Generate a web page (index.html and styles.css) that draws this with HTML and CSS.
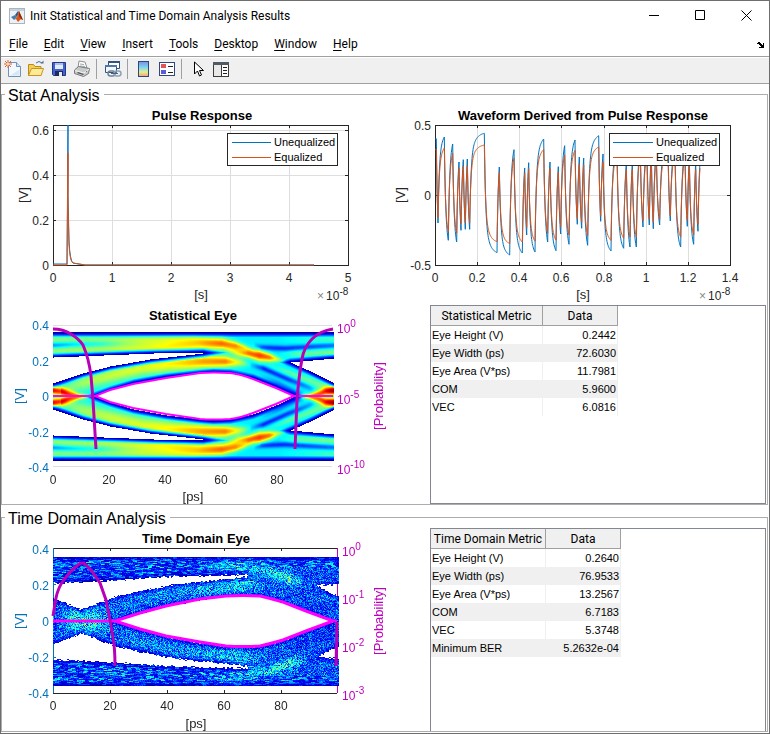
FILE: index.html
```
<!DOCTYPE html>
<html lang="en">
  <head>
    <meta charset="UTF-8" />
    <meta name="viewport" content="width=device-width, initial-scale=1.0" />
    <title>Init Statistical and Time Domain Analysis Results</title>
    <link rel="stylesheet" href="styles.css">
    <script src="plots.js" defer></script>
  </head>
  <body>
    <!-- Title Bar -->
    <header class="title-bar">
      <svg class="app-icon" width="16" height="16" viewBox="0 0 16 16" aria-hidden="true">
        <rect x="0.5" y="0.5" width="15" height="15" fill="#eef1f4" stroke="#a9b4bf" />
        <path d="M1 1h14v2H1z" fill="#c3d2e0" />
        <path d="M2 9l4-2 2 2-3 3z" fill="#3f7fb5" />
        <path d="M6 7l3-4 1 1-2 5z" fill="#275b86" />
        <path d="M5 12l3-3 2-6 4 9-2-1-3 3-2-3z" fill="#d9541a" />
        <path d="M10 3l4 9-2-1-2-3z" fill="#8f2a12" />
      </svg>
      <h1 class="title">Init Statistical and Time Domain Analysis Results</h1>
      <div class="window-controls">
        <button type="button" aria-label="Minimize">
          <svg width="11" height="11" viewBox="0 0 11 11"><path d="M0 5.5h10" /></svg>
        </button>
        <button type="button" aria-label="Maximize">
          <svg width="11" height="11" viewBox="0 0 11 11"><path d="M.5 .5h9v9h-9z" /></svg>
        </button>
        <button type="button" aria-label="Close">
          <svg width="11" height="11" viewBox="0 0 11 11"><path d="M.5 .5l10 10M10.5 .5l-10 10" /></svg>
        </button>
      </div>
    </header>

    <!-- Menu Bar -->
    <nav class="menu-bar">
      <button type="button"><u>F</u>ile</button>
      <button type="button"><u>E</u>dit</button>
      <button type="button"><u>V</u>iew</button>
      <button type="button"><u>I</u>nsert</button>
      <button type="button"><u>T</u>ools</button>
      <button type="button"><u>D</u>esktop</button>
      <button type="button"><u>W</u>indow</button>
      <button type="button"><u>H</u>elp</button>
      <button type="button" class="dock" aria-label="Dock figure">
        <svg width="8" height="6" viewBox="0 0 8 6"><path d="M0 1h1V0h2v1h1v1h1v1h1V1h1v5H2V5h2V4H3V3H2V2H0z" /></svg>
      </button>
    </nav>

    <!-- Toolbar -->
    <div class="toolbar" role="toolbar">
      <button type="button" aria-label="New figure">
        <svg width="18" height="18" viewBox="0 0 18 18">
          <path d="M4.500 2.500h8l4 4v10h-12z" fill="#f4f9fe" stroke="#6f93b8" />
          <path d="M12.500 2.500v4h4" fill="#cfe1f2" stroke="#6f93b8" />
          <path d="M6 15.500h9.500v-6z" fill="#d5e6f5" />
          <path d="M1 1l6 6M7 1L1 7M4 0v8M0 4h8" stroke="#d9623a" />
          <circle cx="4" cy="4" r="1.500" fill="#ffd9a0" />
        </svg>
      </button>
      <button type="button" aria-label="Open file">
        <svg width="18" height="18" viewBox="0 0 18 18">
          <path d="M1.500 15.500v-11h5l1.500 2h6v9z" fill="#f4cf55" stroke="#b98a1c" />
          <path d="M1.500 15.500l3-7h12l-2.500 7z" fill="#ffeb94" stroke="#c4952a" />
          <path d="M9 3q3-3 6 0" fill="none" stroke="#4d7198" />
          <path d="M13.500 3.500h3v-3z" fill="#4d7198" />
        </svg>
      </button>
      <button type="button" aria-label="Save figure">
        <svg width="18" height="18" viewBox="0 0 18 18">
          <path d="M2.500 2.500h13v13h-12l-1-1z" fill="#4262cc" stroke="#26378a" />
          <path d="M5 3h8v6H5z" fill="#e4ecfa" />
          <path d="M5 3h8v2H5z" fill="#a9bfe8" />
          <path d="M5 11h8v5H5z" fill="#23275c" />
          <path d="M9 12h3v4H9z" fill="#e8ebf2" />
        </svg>
      </button>
      <button type="button" aria-label="Print figure">
        <svg width="18" height="18" viewBox="0 0 18 18">
          <path d="M5 8l1-7 6 1 2 6z" fill="#fff" stroke="#8b9097" />
          <path d="M7 4l4 .5M7 6l5 .5" stroke="#9aa" />
          <path d="M1.500 10l4-3.500 11 2-1 5-5 3-9-3z" fill="#c9c9c9" stroke="#77797d" />
          <path d="M2 10.500l9 2.500 5-4" fill="none" stroke="#f4f4f4" />
          <path d="M4 13l6 2 1-1-6-2z" fill="#515358" />
          <path d="M13 11h1v1h-1z" fill="#4a9d37" />
        </svg>
      </button>
      <span class="separator"></span>
      <button type="button" aria-label="Link plot">
        <svg width="18" height="18" viewBox="0 0 18 18">
          <path d="M4.500 1.500h11v7h-11z" fill="#fff" stroke="#31547f" />
          <path d="M4 1h12v2H4z" fill="#31547f" />
          <path d="M1.500 5.500h11v7h-11z" fill="#f3f7fc" stroke="#31547f" />
          <path d="M1 5h12v2H1z" fill="#4c77a8" />
          <rect x="4" y="11" width="7" height="5" rx="2.500" fill="none" stroke="#6f8298" stroke-width="1.500" />
          <rect x="10" y="11" width="7" height="5" rx="2.500" fill="none" stroke="#8ea1b7" stroke-width="1.500" />
          <path d="M7 13.500h7" stroke="#4e6580" />
        </svg>
      </button>
      <span class="separator"></span>
      <button type="button" aria-label="Insert colorbar">
        <svg width="18" height="18" viewBox="0 0 18 18">
          <defs>
            <linearGradient id="bar" x1="0" y1="0" x2="0" y2="1">
              <stop offset="0" stop-color="#7d8fe6" />
              <stop offset="0.400" stop-color="#7fd6ee" />
              <stop offset="0.700" stop-color="#e6ee92" />
              <stop offset="1" stop-color="#f0a37c" />
            </linearGradient>
          </defs>
          <rect x="3.500" y="1.500" width="10" height="15" fill="url(#bar)" stroke="#2f4a7a" />
        </svg>
      </button>
      <button type="button" aria-label="Insert legend">
        <svg width="18" height="18" viewBox="0 0 18 18">
          <rect x="1.500" y="2.500" width="15" height="13" fill="#fff" stroke="#2f4a7a" />
          <path d="M3 4h5v4H3z" fill="#e25555" />
          <path d="M3 10h5v4H3z" fill="#5b5bdc" />
          <path d="M10 6.500h5M10 12.500h5" stroke="#222" />
        </svg>
      </button>
      <span class="separator"></span>
      <button type="button" aria-label="Edit plot">
        <svg width="18" height="18" viewBox="0 0 18 18">
          <path d="M5.500 2v12l3-3 2 5 2-1-2-4.500h4z" fill="#fff" stroke="#000" />
        </svg>
      </button>
      <button type="button" aria-label="Open property inspector">
        <svg width="18" height="18" viewBox="0 0 18 18">
          <rect x="1.500" y="2.500" width="15" height="14" fill="#e9e9e9" stroke="#3c3c3c" />
          <path d="M1 2h16v3H1z" fill="#4f5a66" />
          <path d="M10 5h6v11h-6z" fill="#fff" />
          <path d="M9.500 5v11" stroke="#3c3c3c" />
          <path d="M11 7.500h4M11 10.500h4M11 13.500h4" stroke="#222" />
        </svg>
      </button>
    </div>

    <main>
      <!-- Stat Analysis -->
      <fieldset class="panel">
        <legend>Stat Analysis</legend>
        <div class="row row-pair">
          <svg class="chart" viewBox="0 0 383 199">
            <g transform="translate(51 20)">
              <text class="chart-title" x="149" y="-5">Pulse Response</text>
              <path class="grid" d="M59 0v140M118 0v140M177 0v140M236 0v140M0 5h295M0 50h295M0 95h295" />
              <path class="axes" d="M0 0h295v140h-295zM59 0v3M118 0v3M177 0v3M236 0v3M59 140v-3M118 140v-3M177 140v-3M236 140v-3M0 5h3M0 50h3M0 95h3M295 5h-3M295 50h-3M295 95h-3" />
              <path class="trace unequalized" d="M0 139H14L15 0V70L16 116Q17 136 20 138L32 140H261" />
              <path class="trace equalized" d="M0 140H14L15 28V80L16 120Q17 137 20 138L32 140H261" />
              <g class="ticks end">
                <text x="-4" y="10">0.6</text>
                <text x="-4" y="55">0.4</text>
                <text x="-4" y="100">0.2</text>
                <text x="-4" y="145">0</text>
              </g>
              <g class="ticks">
                <text x="0" y="157">0</text>
                <text x="59" y="157">1</text>
                <text x="118" y="157">2</text>
                <text x="177" y="157">3</text>
                <text x="236" y="157">4</text>
                <text x="295" y="157">5</text>
                <text class="scale" x="264" y="175"><tspan class="times">×</tspan><tspan dx="2">10</tspan><tspan class="power" dy="-5">-8</tspan></text>
              </g>
              <text class="axis-label" x="148" y="174">[s]</text>
              <text class="axis-label" transform="translate(-25 70) rotate(-90)">[V]</text>
              <g class="key">
                <rect x="174" y="8" width="110" height="32" />
                <path class="trace unequalized" d="M179 17h39" />
                <path class="trace equalized" d="M179 32h39" />
                <text x="221" y="21">Unequalized</text>
                <text x="221" y="36">Equalized</text>
              </g>
            </g>
          </svg>

          <svg class="chart" viewBox="0 0 382 199">
            <g transform="translate(50 20)">
              <text class="chart-title" x="148" y="-5">Waveform Derived from Pulse Response</text>
              <path class="grid" d="M42 0v140M84 0v140M126 0v140M169 0v140M211 0v140M253 0v140M0 70h295" />
              <path class="axes" d="M0 0h295v140h-295zM42 0v3M84 0v3M126 0v3M169 0v3M211 0v3M253 0v3M42 140v-3M84 140v-3M126 140v-3M169 140v-3M211 140v-3M253 140v-3M0 70h3M295 70h-3" />
              <path class="trace unequalized" id="wave-unequalized" />
              <path class="trace equalized" id="wave-equalized" />
              <g class="ticks end">
                <text x="-4" y="5">0.5</text>
                <text x="-4" y="75">0</text>
                <text x="-4" y="145">-0.5</text>
              </g>
              <g class="ticks">
                <text x="0" y="157">0</text>
                <text x="42" y="157">0.2</text>
                <text x="84" y="157">0.4</text>
                <text x="126" y="157">0.6</text>
                <text x="169" y="157">0.8</text>
                <text x="211" y="157">1</text>
                <text x="253" y="157">1.2</text>
                <text x="295" y="157">1.4</text>
                <text class="scale" x="264" y="175"><tspan class="times">×</tspan><tspan dx="2">10</tspan><tspan class="power" dy="-5">-8</tspan></text>
              </g>
              <text class="axis-label" x="148" y="174">[s]</text>
              <text class="axis-label" transform="translate(-30 70) rotate(-90)">[V]</text>
              <g class="key">
                <rect x="174" y="8" width="110" height="32" />
                <path class="trace unequalized" d="M178 17h40" />
                <path class="trace equalized" d="M178 32h40" />
                <text x="221" y="21">Unequalized</text>
                <text x="221" y="36">Equalized</text>
              </g>
            </g>
          </svg>
        </div>

        <div class="row row-eye">
          <svg class="chart" viewBox="0 0 428 200">
            <g transform="translate(51 21)">
              <text class="chart-title" x="140" y="-5">Statistical Eye</text>
              <path class="grid" d="M0 0h279M0 141h279" />
              <foreignObject x="0" y="0" width="281" height="141">
                <canvas class="density" id="stat-eye" width="281" height="141"></canvas>
              </foreignObject>
              <path class="contour" d="M0 71H42L57 65L80 59L113 53L147 48Q160 47 177 48Q187 49 200 54L223 63L241 71H280M42 71L57 77L80 83L113 89L147 94Q160 95 177 94Q187 93 200 88L223 79L241 71" />
              <path class="bathtub" d="M0 4Q10 4 18 9T30 20Q36 34 38 51L40 75L43 124M280 4Q267 6 259 14T249 34Q246 50 244 75L242 124" />
              <g class="ticks end left-axis">
                <text x="-4" y="5">0.4</text>
                <text x="-4" y="41">0.2</text>
                <text x="-4" y="76">0</text>
                <text x="-4" y="112">-0.2</text>
                <text x="-4" y="147">-0.4</text>
              </g>
              <g class="ticks start right-axis">
                <text x="284" y="8">10<tspan class="power" dy="-6">0</tspan></text>
                <text x="284" y="79">10<tspan class="power" dy="-6">-5</tspan></text>
                <text x="284" y="149">10<tspan class="power" dy="-6">-10</tspan></text>
              </g>
              <g class="ticks">
                <text x="0" y="159">0</text>
                <text x="56" y="159">20</text>
                <text x="112" y="159">40</text>
                <text x="168" y="159">60</text>
                <text x="224" y="159">80</text>
              </g>
              <text class="axis-label" x="140" y="176">[ps]</text>
              <text class="axis-label left-axis" transform="translate(-29 71) rotate(-90)">[V]</text>
              <text class="axis-label right-axis" transform="translate(330 71) rotate(-90)">[Probability]</text>
            </g>
          </svg>

          <div class="metrics">
            <table>
              <colgroup><col class="name-col"><col class="data-col"></colgroup>
              <thead>
                <tr><th scope="col">Statistical Metric</th><th scope="col">Data</th></tr>
              </thead>
              <tbody>
                <tr><td>Eye Height (V)</td><td>0.2442</td></tr>
                <tr><td>Eye Width (ps)</td><td>72.6030</td></tr>
                <tr><td>Eye Area (V*ps)</td><td>11.7981</td></tr>
                <tr><td>COM</td><td>5.9600</td></tr>
                <tr><td>VEC</td><td>6.0816</td></tr>
              </tbody>
            </table>
          </div>
        </div>
      </fieldset>

      <!-- Time Domain Analysis -->
      <fieldset class="panel">
        <legend>Time Domain Analysis</legend>
        <div class="row row-eye">
          <svg class="chart" viewBox="0 0 428 203">
            <g transform="translate(51 20)">
              <text class="chart-title" x="143" y="-5">Time Domain Eye</text>
              <path class="axes" d="M0 0h284M0 145h284M57 0v3M114 0v3M171 0v3M228 0v3M57 145v-3M114 145v-3M171 145v-3M228 145v-3" />
              <path class="axes left-edge" d="M0 0v145M0 36h3M0 109h3" />
              <path class="axes right-edge" d="M284 0v145M284 48h-3M284 97h-3" />
              <foreignObject x="0" y="0" width="286" height="146">
                <canvas class="density" id="time-eye" width="286" height="146"></canvas>
              </foreignObject>
              <path class="contour heavy" d="M0 73H62L87 65L113 58L147 51L173 48Q190 47 207 48Q220 51 230 54L253 63L280 73H284M62 73L87 81L113 88L147 94L173 98Q190 99 207 98Q220 95 230 92L253 83L280 73" />
              <path class="bathtub" d="M0 68L3 50Q5 40 10 33L18 23L26 16Q29 14 32 16L38 22L47 35L53 52L57 72L60 90Q62 100 62 118M284 74L283 118" />
              <g class="ticks end left-axis">
                <text x="-4" y="6">0.4</text>
                <text x="-4" y="42">0.2</text>
                <text x="-4" y="78">0</text>
                <text x="-4" y="114">-0.2</text>
                <text x="-4" y="150">-0.4</text>
              </g>
              <g class="ticks start right-axis">
                <text x="289" y="8">10<tspan class="power" dy="-6">0</tspan></text>
                <text x="289" y="56">10<tspan class="power" dy="-6">-1</tspan></text>
                <text x="289" y="104">10<tspan class="power" dy="-6">-2</tspan></text>
                <text x="289" y="152">10<tspan class="power" dy="-6">-3</tspan></text>
              </g>
              <g class="ticks">
                <text x="0" y="162">0</text>
                <text x="57" y="162">20</text>
                <text x="114" y="162">40</text>
                <text x="171" y="162">60</text>
                <text x="228" y="162">80</text>
              </g>
              <text class="axis-label" x="143" y="180">[ps]</text>
              <text class="axis-label left-axis" transform="translate(-29 73) rotate(-90)">[V]</text>
              <text class="axis-label right-axis" transform="translate(330 73) rotate(-90)">[Probability]</text>
            </g>
          </svg>

          <div class="metrics metrics-open">
            <table>
              <colgroup><col class="name-col-wide"><col class="data-col"></colgroup>
              <thead>
                <tr><th scope="col">Time Domain Metric</th><th scope="col">Data</th></tr>
              </thead>
              <tbody>
                <tr><td>Eye Height (V)</td><td>0.2640</td></tr>
                <tr><td>Eye Width (ps)</td><td>76.9533</td></tr>
                <tr><td>Eye Area (V*ps)</td><td>13.2567</td></tr>
                <tr><td>COM</td><td>6.7183</td></tr>
                <tr><td>VEC</td><td>5.3748</td></tr>
                <tr><td>Minimum BER</td><td>5.2632e-04</td></tr>
              </tbody>
            </table>
          </div>
        </div>
      </fieldset>
    </main>
  </body>
</html>
```

FILE: styles.css
```
* {
  margin: 0;
  padding: 0;
  box-sizing: border-box;
}

body {
  min-height: 100vh;
  display: flex;
  flex-direction: column;
  border: 1px solid #6e6e6e;
  background-color: #fff;
  color: #000;
  font-family: Roboto, "Segoe UI", sans-serif;
  font-size: 12px;
}

button {
  border: none;
  background: none;
  color: inherit;
  font: inherit;
}

/* Title Bar */
.title-bar {
  display: flex;
  align-items: center;
  height: 29px;
  padding-left: 8px;
}

.title {
  flex-grow: 1;
  margin-left: 5px;
  font-size: 12px;
  font-weight: 400;
}

.window-controls {
  display: flex;
  height: 100%;
}

.window-controls button {
  width: 46px;
  display: flex;
  align-items: center;
  justify-content: center;
}

.window-controls button:hover {
  background-color: #e5e5e5;
}

.window-controls svg {
  fill: none;
  stroke: #000;
}

/* Menu Bar */
.menu-bar {
  display: flex;
  align-items: center;
  height: 27px;
  padding-top: 2px;
  border-bottom: 1px solid #a0a0a0;
}

.menu-bar button {
  padding: 0 8px;
}

.menu-bar u {
  text-underline-offset: 2px;
}

.menu-bar .dock {
  margin-left: auto;
  padding: 0 4px;
}

/* Toolbar */
.toolbar {
  display: flex;
  align-items: center;
  height: 27px;
  padding-bottom: 3px;
  border-top: 1px solid #fff;
  border-bottom: 1px solid #a0a0a0;
  background-color: #f0f0f0;
}

.toolbar button {
  width: 23px;
  height: 22px;
  display: flex;
  align-items: center;
  justify-content: center;
}

.toolbar button:hover {
  background-color: #dcebf7;
}

.separator {
  width: 1px;
  height: 20px;
  margin: 0 4px 0 3px;
  background-color: #a0a0a0;
}

/* Panels */
main {
  flex-grow: 1;
  display: flex;
  flex-direction: column;
  gap: 2px;
  padding: 0 1px 1px 0;
}

.panel {
  min-width: 0;
  border: 1px solid #adadad;
}

.panel legend {
  margin-left: 3px;
  padding: 3px 4px 0 3px;
  font-family: "Liberation Sans", Arial, sans-serif;
  font-size: 16px;
  line-height: 18px;
}

.row {
  display: grid;
}

.row-pair {
  grid-template-columns: 383fr 382fr;
}

.row-eye {
  grid-template-columns: 428fr 337fr;
}

/* Charts */
.chart {
  display: block;
  width: 100%;
  height: auto;
  font-family: "Liberation Sans", Arial, sans-serif;
}

.chart-title {
  font-size: 13px;
  font-weight: 700;
  text-anchor: middle;
}

.axis-label {
  fill: #262626;
  font-size: 13px;
  text-anchor: middle;
}

.ticks {
  fill: #262626;
  font-size: 12px;
  text-anchor: middle;
}

.ticks.end {
  text-anchor: end;
}

.ticks.start,
.ticks .scale {
  text-anchor: start;
}

.power {
  font-size: 10px;
}

.times {
  fill: #888;
}

.chart .left-axis {
  fill: #0072bd;
}

.chart .right-axis {
  fill: #bf00bf;
}

.grid {
  fill: none;
  stroke: #dedede;
  shape-rendering: crispEdges;
}

.axes {
  fill: none;
  stroke: #262626;
  shape-rendering: crispEdges;
}

.left-edge {
  stroke: #0072bd;
}

.right-edge {
  stroke: #bf00bf;
}

.trace {
  fill: none;
  stroke-width: 1;
}

.unequalized {
  stroke: #0072bd;
}

.equalized {
  stroke: #d95319;
}

.key rect {
  fill: #fff;
  stroke: #262626;
  shape-rendering: crispEdges;
}

.key .trace {
  shape-rendering: crispEdges;
}

.key text {
  font-size: 11px;
}

.density {
  display: block;
  image-rendering: pixelated;
}

.contour {
  fill: none;
  stroke: #f0f;
  stroke-width: 2;
}

.contour.heavy {
  stroke-width: 3;
}

.bathtub {
  fill: none;
  stroke: #b800b8;
  stroke-width: 3;
}

/* Metric Tables */
.metrics {
  margin: 1px 1px 0 0;
  border: 1px solid #828790;
  overflow: hidden;
}

.metrics-open {
  margin-top: 0;
  border-bottom: none;
}

.metrics table {
  table-layout: fixed;
  width: 187px;
  border-collapse: separate;
  border-spacing: 0;
}

.metrics-open table {
  width: 190px;
}

.name-col {
  width: 112px;
}

.name-col-wide {
  width: 115px;
}

.data-col {
  width: 75px;
}

.metrics th {
  height: 20px;
  padding-top: 1px;
  border-right: 1px solid #a0a0a0;
  border-bottom: 1px solid #a0a0a0;
  background-color: #f0f0f0;
  font-weight: 400;
  line-height: 18px;
  white-space: nowrap;
}

.metrics td {
  height: 18px;
  padding: 0 1px;
  border-right: 1px solid #f0f0f0;
  font-family: "Liberation Sans", Arial, sans-serif;
  font-size: 11px;
  line-height: 18px;
}

.metrics td:last-child {
  text-align: right;
}

.metrics tbody tr:nth-child(even) {
  background-color: #f0f0f0;
}
```

FILE: plots.js
```
// Linear interpolation over a list of [x, y] points
function lerp(points, x) {
  if (x <= points[0][0]) return points[0][1];
  for (let i = 1; i < points.length; i++) {
    const [x1, y1] = points[i];
    const [x0, y0] = points[i - 1];
    if (x <= x1) return y0 + ((y1 - y0) * (x - x0)) / (x1 - x0);
  }
  return points[points.length - 1][1];
}

// Jet colormap, v in 0..1
function jet(v) {
  const c = (k) => Math.round(255 * Math.max(0, Math.min(1, 1.5 - Math.abs(4 * v - k))));
  return [c(3), c(2), c(1)];
}

// Repeatable noise in 0..1
function noise(x, y) {
  let h = Math.imul(x + 311, 374761393) + Math.imul(y + 173, 668265263);
  h = Math.imul(h ^ (h >>> 13), 1274126177);
  return ((h ^ (h >>> 16)) >>> 0) / 4294967296;
}

/* Waveform: end of each bit run as [time, level], third of a pixel units */
const runs = [
  [4, 169], [9, -84], [28, 174], [40, -136], [53, 153], [65, -141], [72, 99], [78, -106],
  [85, 106], [91, -103], [97, 108], [104, -103], [148, 185], [186, -173], [193, 84],
  [224, -180], [237, 136], [262, -174], [269, 81], [275, -120], [281, 97], [300, -171],
  [326, 168], [338, -141], [345, 99], [363, -167], [370, 85], [377, -117], [389, 148],
  [402, -148], [420, 165], [427, -88], [433, 114], [440, -100], [446, 111], [458, -151],
  [491, 178], [497, -79], [504, 123], [528, -168], [546, 144], [566, -160], [574, 94],
  [585, -156], [592, 94], [604, -156], [616, 144], [624, -96], [636, 144], [643, -90],
  [649, 134], [655, -101], [664, 134], [674, -90], [699, 154], [706, -78], [720, 144],
  [737, -156], [750, 134], [757, -94], [763, 114], [776, -148], [782, 94], [789, -109],
  [795, 99],
];

function wavePath(gain) {
  const settle = (t) => 1 - 0.72 * Math.exp(-t / 3.6) - 0.28 * Math.exp(-t / 14);
  let [x0, y0] = [0, 169];
  let d = `M0 ${(70 - (y0 * gain) / 3).toFixed(1)}`;
  runs.forEach(([x1, y1]) => {
    for (let x = x0 + 1; x <= x1; x++) {
      const y = y0 + ((y1 - y0) * settle(x - x0)) / settle(x1 - x0);
      d += `L${(x / 3).toFixed(1)} ${(70 - (y * gain) / 3).toFixed(1)}`;
    }
    [x0, y0] = [x1, y1];
  });
  return d;
}

document.getElementById("wave-unequalized").setAttribute("d", wavePath(1));
document.getElementById("wave-equalized").setAttribute("d", wavePath(0.81));

/* Eye diagrams, both halves mirror each other, heights are measured from 0 V.
   Where low and high cross over, the gap closes into a dark seam. */
const statEye = {
  mid: 71,
  top: 64,
  gaps: [
    { low: [[0, 13], [30, 23], [57, 30], [97, 37], [133, 41], [150, 43], [182, 50]], high: [[0, 39], [50, 41], [100, 43], [150, 44], [182, 38]], from: 0, to: 182 },
    { low: [[222, 40], [237, 34], [255, 26], [281, 13]], high: [[222, 29], [237, 34], [281, 38]], from: 222, to: 281 },
    { low: [[0, -20]], high: [[28, -6], [41, 0], [57, 6], [80, 13], [113, 19], [147, 23], [160, 24], [177, 23], [200, 18], [223, 9], [242, 0], [255, -6]], from: 28, to: 255 },
  ],
  // [x, height, spread, strength]
  ridges: [
    [[0, 46, 4, 0.15], [60, 47, 4, 0.18], [110, 49, 4, 0.18], [140, 50, 4, 0.14], [170, 51, 4, 0.08], [190, 49, 3, 0.06], [200, 46, 2, 0]],
    [[0, 57, 3, 0.13], [90, 57, 3, 0.14], [140, 58, 3, 0.1], [165, 56, 3, 0.04], [180, 54, 3, 0]],
    [[50, 52, 5, 0], [110, 53, 5, 0.1], [145, 54, 4, 0.2], [168, 53, 4, 0.32], [182, 51, 3, 0.3], [192, 49, 2, 0.14], [200, 46, 2, 0]],
    [[8, 6, 4, 0.1], [30, 14, 6, 0.17], [60, 22, 6, 0.21], [90, 29, 6, 0.23], [120, 33, 6, 0.28], [150, 35, 5, 0.36], [172, 35, 4, 0.39], [186, 34, 3, 0.22], [198, 32, 2, 0]],
    [[170, 47, 2, 0], [184, 44, 3, 0.24], [195, 43, 3, 0.4], [206, 41, 4, 0.46], [216, 39, 3, 0.4], [225, 37, 2, 0.18], [234, 34, 2, 0]],
    [[0, 6, 3, 0.52], [8, 5, 3, 0.46], [16, 2, 3, 0.42], [26, 0, 2, 0.38], [36, 0, 2, 0]],
    [[246, 0, 2, 0], [256, 0, 2, 0.38], [264, 2, 3, 0.42], [272, 5, 3, 0.46], [281, 6, 3, 0.52]],
    [[0, 51, 2, -0.16], [20, 52, 2, -0.1], [70, 53, 2, 0]],
    [[196, 32, 2, 0], [210, 28, 2, -0.2], [235, 17, 2, -0.18], [256, 9, 2, -0.08], [262, 7, 2, 0]],
    [[200, 51, 2, 0], [208, 49, 2, -0.18], [232, 48, 2, -0.2], [281, 51, 2, -0.14]],
    [[205, 22, 2, 0], [225, 13, 2, -0.1], [242, 4, 2, -0.14], [252, 2, 2, 0]],
    [[212, 33, 2, 0], [235, 24, 2, 0.1], [281, 6, 4, 0.12]],
    [[225, 43, 3, 0], [245, 43, 3, 0.1], [281, 44, 3, 0.13]],
    [[225, 57, 3, 0], [281, 57, 3, 0.08]],
  ],
};

const timeEye = {
  mid: 73,
  top: 64,
  gaps: [
    { low: [[0, 23], [28, 12], [60, 24], [80, 29], [120, 37], [160, 41], [196, 45]], high: [[0, 38], [60, 41], [120, 45], [196, 47]], from: 0, to: 194 },
    { low: [[264, 36], [272, 31], [286, 25]], high: [[264, 36], [286, 37]], from: 264, to: 286 },
    { low: [[0, -9]], high: [[62, 0], [87, 8], [113, 15], [147, 22], [173, 25], [190, 26], [207, 25], [230, 19], [253, 10], [280, 0]], from: 62, to: 280 },
  ],
  ridges: [
    [[8, 4, 6, 0], [20, 3, 7, 0.18], [36, 3, 7, 0.2], [50, 2, 5, 0.12], [60, 2, 4, 0]],
    [[40, 10, 5, 0], [80, 20, 5, 0.05], [130, 31, 6, 0.08], [185, 36, 6, 0.16], [215, 36, 6, 0]],
    [[140, 57, 5, 0], [175, 56, 5, 0.12], [205, 53, 4, 0.14], [238, 42, 4, 0.24], [254, 38, 3, 0]],
    [[230, 30, 3, 0], [250, 22, 3, -0.06], [280, 10, 3, -0.04]],
  ],
};

function ridgeSum(ridges, x, a) {
  let sum = 0;
  ridges.forEach((r) => {
    if (x < r[0][0] || x > r[r.length - 1][0]) return;
    const center = lerp(r.map((p) => [p[0], p[1]]), x);
    const spread = lerp(r.map((p) => [p[0], p[2]]), x);
    const strength = lerp(r.map((p) => [p[0], p[3]]), x);
    sum += strength * Math.exp(-(((a - center) / spread) ** 2) / 2);
  });
  return sum;
}

// Distance to the closest empty area, negative inside of one
function edgeDistance(eye, x, a) {
  let d = eye.top - a;
  eye.gaps.forEach((g) => {
    if (x < g.from || x > g.to) return;
    const low = lerp(g.low, x);
    const high = lerp(g.high, x);
    d = Math.min(d, Math.max(low - a, a - high));
  });
  return d;
}

function drawEye(id, eye, shade) {
  const canvas = document.getElementById(id);
  const ctx = canvas.getContext("2d");
  const image = ctx.createImageData(canvas.width, canvas.height);
  for (let y = 0; y < canvas.height; y++) {
    for (let x = 0; x < canvas.width; x++) {
      const a = Math.abs(y - eye.mid);
      const v = shade(x, y, a, edgeDistance(eye, x, a), ridgeSum(eye.ridges, x, a));
      if (v === null) continue;
      image.data.set([...jet(v), 255], (y * canvas.width + x) * 4);
    }
  }
  ctx.putImageData(image, 0, 0);
}

drawEye("stat-eye", statEye, (x, y, a, d, ridge) => {
  if (d < 0) return null;
  const body = 0.36 + ridge;
  return 0.02 + (body - 0.02) * Math.min(1, d / 5);
});

drawEye("time-eye", timeEye, (x, y, a, d, ridge) => {
  const ragged = a > 60 ? 0 : noise(x >> 1, y) * 2 - 1;
  if (d < ragged) return null;
  // long dashes in the outer rails, fine grain in the crossings
  const rail = a > 38 && (x < 200 || a > 54);
  const grain = rail ? noise((x + Math.floor(noise(y, 7) * 9)) >> 2, y) : noise(x, y);
  const fine = noise(x + 900, y + 400);
  const v = rail
    ? 0.06 + 0.28 * grain ** 2 + 0.12 * fine ** 2 + ridge * (0.3 + fine)
    : 0.05 + 0.24 * grain ** 1.5 + 0.12 * fine + ridge * (0.3 + fine);
  return v * (0.5 + 0.5 * Math.min(1, Math.max(0, d) / 5));
});
```
